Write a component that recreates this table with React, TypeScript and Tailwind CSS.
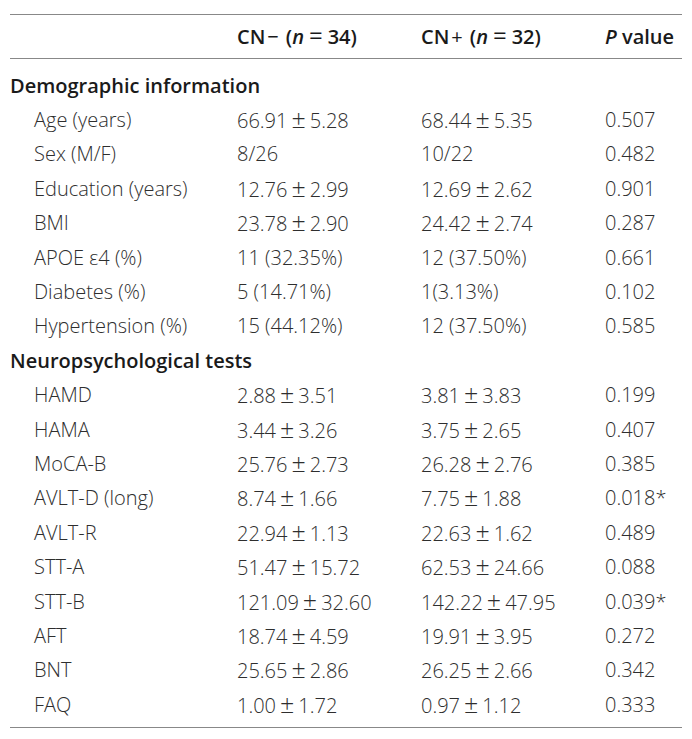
import React from "react";

type Row = { label: string; neg: string; pos: string; p: string };

const demographic: Row[] = [
  { label: "Age (years)", neg: "66.91 ± 5.28", pos: "68.44 ± 5.35", p: "0.507" },
  { label: "Sex (M/F)", neg: "8/26", pos: "10/22", p: "0.482" },
  { label: "Education (years)", neg: "12.76 ± 2.99", pos: "12.69 ± 2.62", p: "0.901" },
  { label: "BMI", neg: "23.78 ± 2.90", pos: "24.42 ± 2.74", p: "0.287" },
  { label: "APOE ε4 (%)", neg: "11 (32.35%)", pos: "12 (37.50%)", p: "0.661" },
  { label: "Diabetes (%)", neg: "5 (14.71%)", pos: "1(3.13%)", p: "0.102" },
  { label: "Hypertension (%)", neg: "15 (44.12%)", pos: "12 (37.50%)", p: "0.585" },
];

const neuro: Row[] = [
  { label: "HAMD", neg: "2.88 ± 3.51", pos: "3.81 ± 3.83", p: "0.199" },
  { label: "HAMA", neg: "3.44 ± 3.26", pos: "3.75 ± 2.65", p: "0.407" },
  { label: "MoCA-B", neg: "25.76 ± 2.73", pos: "26.28 ± 2.76", p: "0.385" },
  { label: "AVLT-D (long)", neg: "8.74 ± 1.66", pos: "7.75 ± 1.88", p: "0.018*" },
  { label: "AVLT-R", neg: "22.94 ± 1.13", pos: "22.63 ± 1.62", p: "0.489" },
  { label: "STT-A", neg: "51.47 ± 15.72", pos: "62.53 ± 24.66", p: "0.088" },
  { label: "STT-B", neg: "121.09 ± 32.60", pos: "142.22 ± 47.95", p: "0.039*" },
  { label: "AFT", neg: "18.74 ± 4.59", pos: "19.91 ± 3.95", p: "0.272" },
  { label: "BNT", neg: "25.65 ± 2.86", pos: "26.25 ± 2.66", p: "0.342" },
  { label: "FAQ", neg: "1.00 ± 1.72", pos: "0.97 ± 1.12", p: "0.333" },
];

// mean ± sd, with the ± drawn a little larger as in the printed table
function Value({ text }: { text: string }) {
  const parts = text.split(" ± ");
  if (parts.length < 2) return <>{text}</>;
  return (
    <>
      {parts[0]}
      <span className="mx-[4px] text-[25px] leading-none">±</span>
      {parts[1]}
    </>
  );
}

function DataRow({ row }: { row: Row }) {
  return (
    <tr className="h-[34.4px]">
      <td className="pl-6">{row.label}</td>
      <td>
        <Value text={row.neg} />
      </td>
      <td>
        <Value text={row.pos} />
      </td>
      <td>{row.p}</td>
    </tr>
  );
}

function Section({ title }: { title: string }) {
  return (
    <tr className="h-[34.4px]">
      <td colSpan={4} className="font-semibold text-[#1a1a1a]">
        {title}
      </td>
    </tr>
  );
}

export default function App() {
  return (
    <div className="min-h-[739px] w-[692px] bg-white pt-[14px] font-['Open_Sans',sans-serif] text-[20px] leading-[26px] font-light text-[#2e2e2e]">
      <table className="ml-[10px] w-[672px] table-fixed border-collapse">
        <colgroup>
          <col className="w-[227px]" />
          <col className="w-[184px]" />
          <col className="w-[184px]" />
          <col className="w-[77px]" />
        </colgroup>
        <thead>
          <tr className="h-[44px] border-y-[1.5px] border-[#888] text-left text-[#1a1a1a]">
            <th />
            <th className="whitespace-nowrap font-semibold">
              CN<span className="ml-[2px] mr-[7px] font-normal">−</span>(<i>n</i>
              <span className="mx-[5px] text-[24px] font-normal leading-none">=</span>34)
            </th>
            <th className="whitespace-nowrap font-semibold">
              CN<span className="ml-[2px] mr-[7px] font-normal">+</span>(<i>n</i>
              <span className="mx-[5px] text-[24px] font-normal leading-none">=</span>32)
            </th>
            <th className="whitespace-nowrap font-semibold">
              <i>P</i> value
            </th>
          </tr>
        </thead>
        <tbody>
          <tr className="h-[10px]" />
          <Section title="Demographic information" />
          {demographic.map((r) => (
            <DataRow key={r.label} row={r} />
          ))}
          <Section title="Neuropsychological tests" />
          {neuro.map((r) => (
            <DataRow key={r.label} row={r} />
          ))}
          <tr className="h-[6px] border-b-[1.5px] border-[#888]" />
        </tbody>
      </table>
    </div>
  );
}
